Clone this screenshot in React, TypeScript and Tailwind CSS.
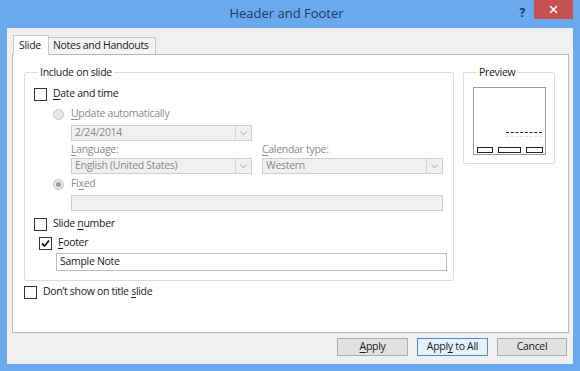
import React from 'react';

const font = "font-['Open_Sans',sans-serif]";

function Checkbox({ checked = false }: { checked?: boolean }) {
  return (
    <div className="w-[13px] h-[13px] border border-[#333] bg-white flex items-center justify-center shrink-0">
      {checked && (
        <svg width="9" height="9" viewBox="0 0 9 9">
          <path d="M1 4.5 L3.5 7 L8 1.5" fill="none" stroke="#111" strokeWidth="1.8" />
        </svg>
      )}
    </div>
  );
}

function Radio({ checked = false }: { checked?: boolean }) {
  return (
    <div className="w-[11px] h-[11px] rounded-full border border-[#c4c4c4] bg-[#e8e8e8] flex items-center justify-center shrink-0">
      {checked && <div className="w-[5px] h-[5px] rounded-full bg-[#9a9a9a]" />}
    </div>
  );
}

function Combo({ value, width }: { value: string; width: string }) {
  return (
    <div className={`${width} h-[16px] border border-[#cfcfcf] bg-[#f0f0f0] flex items-stretch`}>
      <div className="flex-1 flex items-center pl-[3px] text-[#888]">{value}</div>
      <div className="w-[16px] border-l border-[#d6d6d6] flex items-center justify-center">
        <svg width="7" height="5" viewBox="0 0 7 5">
          <path d="M0.5 0.5 L3.5 4 L6.5 0.5" fill="none" stroke="#aaa" strokeWidth="1" />
        </svg>
      </div>
    </div>
  );
}

function U({ children }: { children: React.ReactNode }) {
  return <span className="underline underline-offset-2">{children}</span>;
}

export default function App() {
  return (
    <div
      className={`w-[580px] h-[371px] bg-[#6aa9ee] flex flex-col text-[10.5px] tracking-[-0.3px] text-[#1a1a1a] ${font}`}
    >
      {/* title bar */}
      <div className="h-[28px] flex shrink-0">
        <div className="flex-1" />
        <div className="pt-[4px] text-[13px] tracking-normal text-[#1f3a5c]">Header and Footer</div>
        <div className="flex-1 flex justify-end items-start pr-[7px]">
          <div className="mt-[4px] mr-[9px] text-[12px] font-bold text-[#1f3a5c]">?</div>
          <div className="w-[39px] h-[19px] bg-[#c75050] flex items-center justify-center">
            <svg width="9" height="9" viewBox="0 0 9 9">
              <path d="M1 1 L8 8 M8 1 L1 8" stroke="#fff" strokeWidth="1.6" />
            </svg>
          </div>
        </div>
      </div>

      {/* client area */}
      <div className="flex-1 mx-[7px] mb-[7px] bg-[#f0f0f0] flex flex-col pt-[7px]">
        {/* tabs */}
        <div className="flex items-end h-[19px] ml-[6px] relative z-10 whitespace-nowrap">
          <div className="w-[36px] h-[20px] -mb-[1px] bg-white border border-b-0 border-[#c8c8c8] flex items-center pl-[5px]">
            Slide
          </div>
          <div className="w-[107px] h-[17px] bg-[#f3f3f3] border border-l-0 border-b-0 border-[#c8c8c8] flex items-center pl-[4px]">
            Notes and Handouts
          </div>
        </div>

        {/* panel */}
        <div className="ml-[5px] w-[557px] h-[279px] bg-white border border-[#b8b8b8] flex pl-[11px] pt-[10px]">
          <div className="flex flex-col">
            <fieldset className="w-[430px] h-[216px] border border-[#dcdcdc] rounded-[2px] pl-[9px]">
              <legend className="ml-[4px] px-[2px] leading-[14px]">Include on slide</legend>
              <div className="mt-[8px] h-[14px] flex items-center gap-[6px]">
                <Checkbox />
                <span>
                  <U>D</U>ate and time
                </span>
              </div>
              <div className="mt-[6px] h-[14px] flex items-center gap-[7px] ml-[19px] text-[#8a8a8a]">
                <Radio />
                <span>
                  <U>U</U>pdate automatically
                </span>
              </div>
              <div className="mt-[4px] ml-[37px]">
                <Combo value="2/24/2014" width="w-[181px]" />
              </div>
              <div className="mt-[2px] h-[14px] ml-[37px] flex items-center text-[#8a8a8a]">
                <span className="w-[191px]">
                  <U>L</U>anguage:
                </span>
                <span>
                  <U>C</U>alendar type:
                </span>
              </div>
              <div className="mt-[1px] ml-[37px] flex gap-[10px]">
                <Combo value="English (United States)" width="w-[181px]" />
                <Combo value="Western" width="w-[181px]" />
              </div>
              <div className="mt-[3px] h-[14px] flex items-center gap-[7px] ml-[19px] text-[#8a8a8a]">
                <Radio checked />
                <span>
                  Fi<U>x</U>ed
                </span>
              </div>
              <div className="mt-[4px] ml-[37px] w-[372px] h-[16px] border border-[#cfcfcf] bg-[#f0f0f0]" />
              <div className="mt-[6px] h-[14px] flex items-center gap-[6px]">
                <Checkbox />
                <span>
                  Slide <U>n</U>umber
                </span>
              </div>
              <div className="mt-[5px] h-[14px] flex items-center gap-[6px] ml-[5px]">
                <Checkbox checked />
                <span>
                  <U>F</U>ooter
                </span>
              </div>
              <div className="mt-[3px] ml-[22px] w-[391px] h-[18px] border border-[#bdbdbd] bg-white flex items-center pl-[3px] text-[#222]">
                Sample Note
              </div>
            </fieldset>
            <div className="mt-[4px] h-[14px] flex items-center gap-[6px]">
              <Checkbox />
              <span>
                Don’t show on title <U>s</U>lide
              </span>
            </div>
          </div>

          {/* preview */}
          <fieldset className="ml-[9px] w-[92px] h-[99px] border border-[#dcdcdc] rounded-[2px] pl-[9px]">
            <legend className="ml-[4px] px-[2px] leading-[14px]">Preview</legend>
            <div className="mt-[8px] w-[73px] h-[68px] border border-[#9a9a9a] bg-white flex flex-col justify-end pl-[3px] pb-[1px]">
              <div className="ml-[29px] w-[36px] border-t-[1.5px] border-dashed border-[#222]" />
              <div className="ml-[29px] w-[36px] mt-[3px] border-t border-dashed border-[#e0e0e0]" />
              <div className="mt-[10px] flex gap-[5px]">
                <div className="w-[16px] h-[6px] border-[1.5px] border-[#222]" />
                <div className="w-[23px] h-[6px] border-[1.5px] border-[#222]" />
                <div className="w-[17px] h-[6px] border-[1.5px] border-[#222]" />
              </div>
            </div>
          </fieldset>
        </div>

        {/* buttons */}
        <div className="mt-[5px] flex justify-end gap-[9px] pr-[6px]">
          <button className="w-[71px] h-[18px] bg-[#e1e1e1] border border-[#adadad] flex items-center justify-center">
            <span>
              <U>A</U>pply
            </span>
          </button>
          <button className="w-[71px] h-[18px] bg-[#e5f1fb] border border-[#4a8fd0] flex items-center justify-center">
            <span>
              Appl<U>y</U> to All
            </span>
          </button>
          <button className="w-[70px] h-[18px] bg-[#e1e1e1] border border-[#adadad] flex items-center justify-center">
            Cancel
          </button>
        </div>
      </div>
    </div>
  );
}
